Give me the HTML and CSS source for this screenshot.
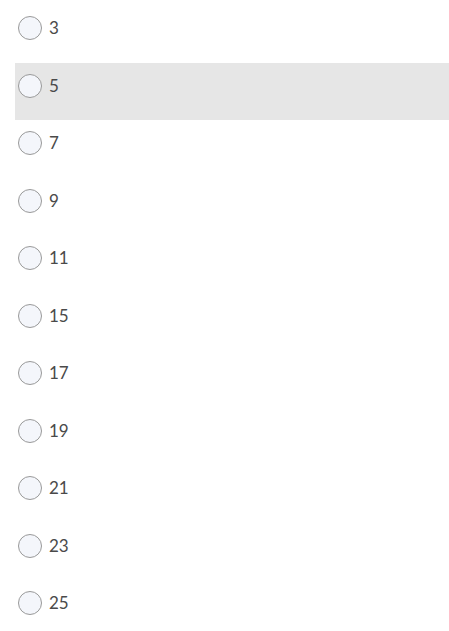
FILE: index.html
```html
<!DOCTYPE html>
<html lang="en">
<head>
  <meta charset="UTF-8" />
  <title>Answer choices</title>
  <link rel="stylesheet" href="styles.css">
</head>
<body>
  <ul class="choices">
    <li class="choice"><span class="radio"></span><span class="label">3</span></li>
    <li class="choice hover"><span class="radio"></span><span class="label">5</span></li>
    <li class="choice"><span class="radio"></span><span class="label">7</span></li>
    <li class="choice"><span class="radio"></span><span class="label">9</span></li>
    <li class="choice"><span class="radio"></span><span class="label">11</span></li>
    <li class="choice"><span class="radio"></span><span class="label">15</span></li>
    <li class="choice"><span class="radio"></span><span class="label">17</span></li>
    <li class="choice"><span class="radio"></span><span class="label">19</span></li>
    <li class="choice"><span class="radio"></span><span class="label">21</span></li>
    <li class="choice"><span class="radio"></span><span class="label">23</span></li>
    <li class="choice"><span class="radio"></span><span class="label">25</span></li>
  </ul>
</body>
</html>
```

FILE: styles.css
```css
html, body {
  margin: 0;
  padding: 0;
  background: #fff;
  font-family: Lato, 'Liberation Sans', sans-serif;
  color: #4a4a4a;
  overflow: hidden;
}

.choices {
  list-style: none;
  margin: 0;
  padding: 5px 0 0 15px;
}

.choice {
  display: flex;
  align-items: flex-start;
  gap: 7px;
  height: 57.5px;
  box-sizing: border-box;
  padding: 11px 0 0 3px;
}

.choice.hover {
  background: #e6e6e6;
}

.radio {
  width: 22px;
  height: 22px;
  border: 1px solid #999;
  border-radius: 50%;
  background: #f4f6fb;
  flex-shrink: 0;
}

.label {
  font-size: 17px;
  line-height: 24px;
}
```
